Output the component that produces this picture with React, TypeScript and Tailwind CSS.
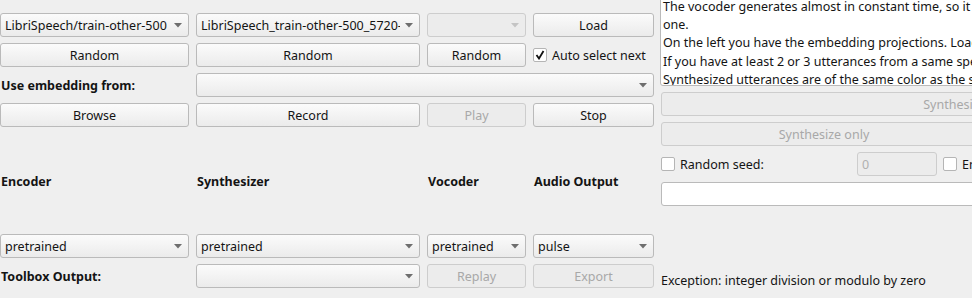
import React from "react";

const Arrow = ({ disabled = false }: { disabled?: boolean }) => (
  <svg width="8" height="5" viewBox="0 0 8 5" className="shrink-0">
    <path d="M0 0 L8 0 L4 4.5 Z" fill={disabled ? "#c4c4c4" : "#6e6e6e"} />
  </svg>
);

const Btn = ({ children, disabled = false }: { children?: React.ReactNode; disabled?: boolean }) =>
  disabled ? (
    <div className="h-6 flex items-center justify-center rounded-[3px] border border-[#cdcdcd] bg-[#ececec] text-[#a8a8a8] whitespace-nowrap overflow-hidden">
      <span className="mt-[2px]">{children}</span>
    </div>
  ) : (
    <div className="h-6 flex items-center justify-center rounded-[3px] border border-[#bababa] bg-linear-to-b from-[#fbfbfb] to-[#ebebeb] text-[#141414] whitespace-nowrap overflow-hidden">
      <span className="mt-[2px]">{children}</span>
    </div>
  );

const Combo = ({ children, disabled = false }: { children?: React.ReactNode; disabled?: boolean }) =>
  disabled ? (
    <div className="h-6 flex items-center rounded-[3px] border border-[#cdcdcd] bg-[#ececec] pl-[4px] pr-[6px] text-[#a8a8a8]">
      <div className="flex-1 overflow-hidden whitespace-nowrap mt-[2px]">{children}</div>
      <Arrow disabled />
    </div>
  ) : (
    <div className="h-6 flex items-center rounded-[3px] border border-[#bababa] bg-linear-to-b from-[#fbfbfb] to-[#ebebeb] pl-[4px] pr-[6px] text-[#141414]">
      <div className="flex-1 overflow-hidden whitespace-nowrap mr-[5px] mt-[2px]">{children}</div>
      <Arrow />
    </div>
  );

const Check = ({ checked = false }: { checked?: boolean }) => (
  <div className="w-[14px] h-[14px] shrink-0 rounded-[2px] border border-[#b5b5b5] bg-white flex items-center justify-center">
    {checked && (
      <svg width="10" height="10" viewBox="0 0 10 10">
        <path d="M1.5 5 L4 8.5 L8.5 1" stroke="#111" strokeWidth="1.8" fill="none" />
      </svg>
    )}
  </div>
);

const Label = ({ children }: { children: React.ReactNode }) => (
  <div className="font-bold text-[#141414] whitespace-nowrap pl-[1px] mt-[2px]">{children}</div>
);

const row = "grid grid-cols-[189px_224px_99px_121px] gap-x-[7px]";

export default function App() {
  return (
    <div className="w-[972px] h-[298px] overflow-hidden bg-[#efefef] font-['Noto_Sans',sans-serif] text-[12.5px] leading-[16px] flex">
      {/* Left panel */}
      <div className="w-[654px] shrink-0 pt-[13px] flex flex-col gap-[6px]">
        <div className={row}>
          <Combo>LibriSpeech/train-other-500</Combo>
          <Combo>LibriSpeech_train-other-500_5720-60071</Combo>
          <Combo disabled></Combo>
          <Btn>Load</Btn>
        </div>
        <div className={row}>
          <Btn>Random</Btn>
          <Btn>Random</Btn>
          <Btn>Random</Btn>
          <div className="h-6 flex items-center gap-[5px] text-[#141414]">
            <Check checked />
            <span className="whitespace-nowrap mt-[2px]">Auto select next</span>
          </div>
        </div>
        <div className="grid grid-cols-[189px_458px] gap-x-[7px]">
          <div className="h-6 flex items-center">
            <Label>Use embedding from:</Label>
          </div>
          <Combo></Combo>
        </div>
        <div className={row}>
          <Btn>Browse</Btn>
          <Btn>Record</Btn>
          <Btn disabled>Play</Btn>
          <Btn>Stop</Btn>
        </div>
        <div className={`${row} h-[95px] items-center`}>
          <Label>Encoder</Label>
          <Label>Synthesizer</Label>
          <Label>Vocoder</Label>
          <Label>Audio Output</Label>
        </div>
        <div className={row}>
          <Combo>pretrained</Combo>
          <Combo>pretrained</Combo>
          <Combo>pretrained</Combo>
          <Combo>pulse</Combo>
        </div>
        <div className={row}>
          <div className="h-6 flex items-center">
            <Label>Toolbox Output:</Label>
          </div>
          <Combo></Combo>
          <Btn disabled>Replay</Btn>
          <Btn disabled>Export</Btn>
        </div>
      </div>

      {/* Right panel */}
      <div className="w-[700px] shrink-0 ml-[6px] flex flex-col">
        <div className="h-[96px] shrink-0 -mt-[10px] pt-[10px] bg-white border border-[#bababa] rounded-[3px] overflow-hidden pl-[2px] text-[#141414]">
          <div className="-mt-[3px] leading-[18.2px] whitespace-nowrap">
            <div>The vocoder generates almost in constant time, so it will be more time efficient for longer inputs like this</div>
            <div>one.</div>
            <div>On the left you have the embedding projections. Load or record more utterances to see them.</div>
            <div>If you have at least 2 or 3 utterances from a same speaker, a cluster should form.</div>
            <div>Synthesized utterances are of the same color as the speaker whose voice was used, but they're represented</div>
            <div>with a cross.</div>
          </div>
        </div>
        <div className="mt-[6px] w-[658px] ml-[1px]">
          <Btn disabled>Synthesize and vocode</Btn>
        </div>
        <div className="mt-[6px] ml-[1px] grid grid-cols-[326px_326px] gap-x-[6px]">
          <Btn disabled>Synthesize only</Btn>
          <Btn disabled>Vocode only</Btn>
        </div>
        <div className="mt-[6px] ml-[1px] h-6 flex items-center text-[#141414]">
          <div className="w-[196px] flex items-center gap-[5px]">
            <Check />
            <span className="whitespace-nowrap mt-[2px]">Random seed:</span>
          </div>
          <div className="w-[80px] h-6 rounded-[3px] border border-[#cdcdcd] bg-[#ececec] text-[#b0b0b0] flex items-center pl-[4px]">
            <span className="mt-[2px]">0</span>
          </div>
          <div className="ml-[6px] flex items-center gap-[5px]">
            <Check />
            <span className="whitespace-nowrap mt-[2px]">Enhance vocoder output</span>
          </div>
        </div>
        <div className="mt-[6px] ml-[1px] h-6 w-[658px] rounded-[3px] border border-[#bababa] bg-white"></div>
        <div className="mt-[67px] ml-[1px] text-[#141414] whitespace-nowrap">Exception: integer division or modulo by zero</div>
      </div>
    </div>
  );
}
